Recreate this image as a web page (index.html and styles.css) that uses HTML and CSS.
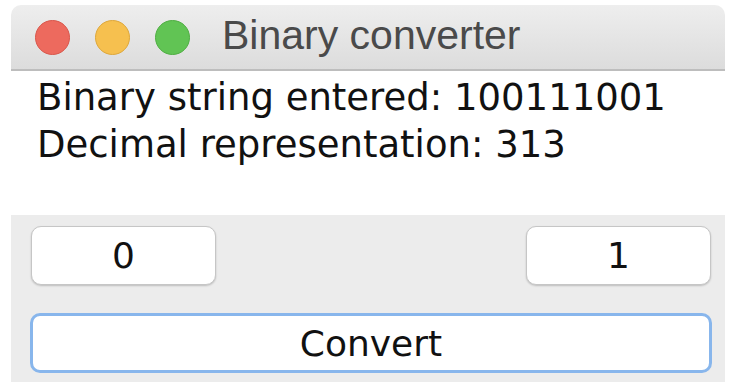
FILE: index.html
```html
<!DOCTYPE html>
<html lang="en">
<head>
    <meta charset="UTF-8">
    <meta name="viewport" content="width=device-width, initial-scale=1.0">
    <title>Binary converter</title>
    <link rel="stylesheet" href="styles.css">
</head>
<body>
    <div class="window">
        <div class="titlebar">
            <div class="lights">
                <span class="light red"></span>
                <span class="light yellow"></span>
                <span class="light green"></span>
            </div>
            <div class="title">Binary converter</div>
        </div>
        <div class="output">
            <div class="line">Binary string entered: <span id="binary">100111001</span></div>
            <div class="line">Decimal representation: <span id="decimal">313</span></div>
        </div>
        <div class="panel">
            <div class="digits">
                <button class="btn digit" data-bit="0">0</button>
                <button class="btn digit" data-bit="1">1</button>
            </div>
            <button class="btn convert" id="convert">Convert</button>
        </div>
    </div>

    <script>
    let bits = '100111001';
    document.querySelectorAll('.digit').forEach(btn => {
        btn.onclick = () => {
            bits += btn.dataset.bit;
            document.getElementById('binary').textContent = bits;
        };
    });
    document.getElementById('convert').onclick = () => {
        document.getElementById('decimal').textContent = bits ? parseInt(bits, 2) : '';
        bits = '';
    };
    </script>
</body>
</html>
```

FILE: styles.css
```css
body { margin: 0; background: #fff; font-family: "DejaVu Sans", sans-serif; }
.window { width: 714px; margin: 5px 0 0 11px; }
.titlebar { height: 64px; display: flex; align-items: center; border-radius: 10px 10px 0 0; border-bottom: 2px solid #bdbdbd; background: linear-gradient(#eeeeee, #dcdcdc); }
.lights { display: flex; gap: 25px; padding-left: 24px; }
.light { width: 33px; height: 33px; border-radius: 50%; border: 1px solid; }
.red { background: #ed6a5e; border-color: #d9564a; }
.yellow { background: #f6c04f; border-color: #dea73a; }
.green { background: #61c454; border-color: #4fae42; }
.title { margin-left: 32px; font-family: "Liberation Sans", sans-serif; font-size: 41px; color: #4a4a4a; padding-bottom: 4px; }
.output { height: 144px; padding: 3px 0 0 26px; box-sizing: border-box; color: #111; font-size: 37px; }
.line { line-height: 47px; }
.panel { background: #ececec; padding: 11px 14px 9px 20px; height: 167px; box-sizing: border-box; }
.digits { display: flex; justify-content: space-between; }
.btn { font-family: "DejaVu Sans", sans-serif; font-size: 36px; color: #111; background: #fff; border: 1px solid #c6c6c6; border-radius: 10px; box-shadow: 0 1px 2px rgba(0,0,0,0.2); cursor: pointer; }
.digit { width: 185px; height: 59px; }
.convert { display: block; width: 682px; height: 60px; margin: 28px 0 0 -1px; border: 3px solid #88b6ec; box-shadow: none; }
```
